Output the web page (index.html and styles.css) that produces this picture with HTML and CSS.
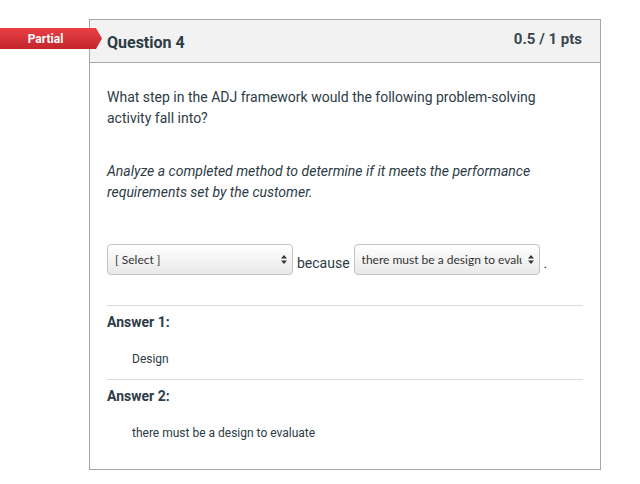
FILE: index.html
```html
<!DOCTYPE html>
<html lang="en">
<head>
    <meta charset="UTF-8">
    <meta name="viewport" content="width=device-width, initial-scale=1.0">
    <title>Question 4</title>
    <link rel="stylesheet" href="styles.css">
</head>
<body>
    <div class="page">
        <div class="badge">Partial</div>
        <div class="question">
            <div class="question-header">
                <span class="question-name">Question 4</span>
                <span class="question-points">0.5 / 1 pts</span>
            </div>
            <div class="question-body">
                <p class="text">What step in the ADJ framework would the following problem-solving activity fall into?</p>
                <p class="text italic">Analyze a completed method to determine if it meets the performance requirements set by the customer.</p>
                <div class="select-row">
                    <div class="select">
                        <span class="select-value">[ Select ]</span>
                        <svg class="select-arrow" width="6" height="9" viewBox="0 0 6 9"><path d="M3 0 L6 3.5 L0 3.5 Z M0 5.5 L6 5.5 L3 9 Z" fill="#333"/></svg>
                    </div>
                    <span class="word">because</span>
                    <div class="select">
                        <span class="select-value">there must be a design to evaluate</span>
                        <svg class="select-arrow" width="6" height="9" viewBox="0 0 6 9"><path d="M3 0 L6 3.5 L0 3.5 Z M0 5.5 L6 5.5 L3 9 Z" fill="#333"/></svg>
                    </div>
                    <span class="word">.</span>
                </div>
                <div class="answer">
                    <div class="answer-label">Answer 1:</div>
                    <div class="answer-text">Design</div>
                </div>
                <div class="answer last">
                    <div class="answer-label">Answer 2:</div>
                    <div class="answer-text">there must be a design to evaluate</div>
                </div>
            </div>
        </div>
    </div>
</body>
</html>
```

FILE: styles.css
```css
body {
    margin: 0;
    background: #fff;
    font-family: Roboto, "Liberation Sans", sans-serif;
    color: #2d3b45;
}
.page {
    position: relative;
    padding: 19px 0 0 89px;
}
.badge {
    position: absolute;
    left: 0;
    top: 28px;
    width: 102px;
    height: 21px;
    padding-right: 11px;
    box-sizing: border-box;
    text-align: center;
    line-height: 22px;
    font-size: 12px;
    font-weight: bold;
    color: #fff;
    background: linear-gradient(#ea4046, #c1262c);
    clip-path: polygon(0 0, 96px 0, 102px 50%, 96px 100%, 0 100%);
}
.question {
    width: 512px;
    box-sizing: border-box;
    border: 1px solid #a6a6a6;
}
.question-header {
    display: flex;
    justify-content: space-between;
    align-items: flex-start;
    height: 43px;
    box-sizing: border-box;
    padding: 0 18px 0 17px;
    background: #f2f2f2;
    border-bottom: 1px solid #a6a6a6;
}
.question-name {
    padding-top: 13px;
    font-size: 16px;
    line-height: 20px;
    font-weight: bold;
}
.question-points {
    padding-top: 9px;
    font-size: 15px;
    line-height: 20px;
    font-weight: bold;
    color: #3b4750;
}
.question-body {
    padding: 24px 17px 26px 17px;
}
.text {
    margin: 0 0 32px;
    font-size: 14px;
    line-height: 21px;
}
.italic {
    font-style: italic;
    margin-bottom: 41px;
}
.select-row {
    display: flex;
    align-items: flex-end;
    gap: 4px;
    margin-bottom: 30px;
}
.select {
    display: flex;
    align-items: center;
    width: 186px;
    height: 31px;
    box-sizing: border-box;
    padding: 0 5px 0 7px;
    border: 1px solid #c4c4c4;
    border-radius: 4px;
    background: linear-gradient(#ffffff, #e9e9e9);
    font-family: Lato, "Liberation Sans", sans-serif;
    font-size: 12px;
    color: #333;
}
.select-value {
    flex: 1;
    overflow: hidden;
    white-space: nowrap;
    margin-right: 6px;
}
.select-arrow {
    flex: none;
}
.word {
    font-size: 14px;
    line-height: 21px;
    margin-bottom: 1px;
}
.answer {
    border-top: 1px solid #dcdcdc;
    padding: 6px 0 10px;
}
.answer.last {
    padding-bottom: 0;
}
.answer-label {
    font-size: 14px;
    line-height: 21px;
    font-weight: bold;
}
.answer-text {
    margin-top: 16px;
    padding-left: 25px;
    font-size: 12px;
    line-height: 20px;
}
```
